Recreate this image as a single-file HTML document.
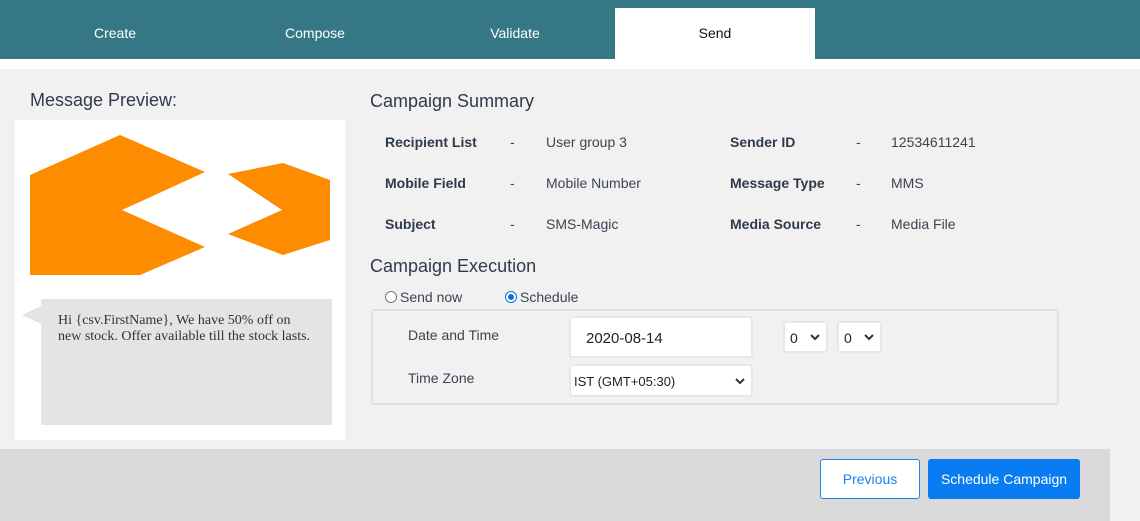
<!DOCTYPE html>
<html><head><style>
*{margin:0;padding:0;box-sizing:border-box}
body{width:1140px;height:521px;background:#f1f1f1;font-family:"Liberation Sans",sans-serif;position:relative;overflow:hidden;color:#2f3a4a}
.abs{position:absolute}
.hdr{left:0;top:0;width:1140px;height:59px;background:#367785}
.strip{left:0;top:59px;width:1140px;height:10px;background:#fff}
.tab{top:8px;height:51px;width:200px;text-align:center;line-height:51px;font-size:14px;color:#fff}
.lbl{font-size:14px;font-weight:bold;color:#2f3a4a}
.val{font-size:14px;color:#3a4452}
.h{font-size:18px;color:#2f3a4a}
.sel{background:#fff;border:2px solid #e3e8ee;border-radius:3px;font-size:14px;color:#222}
.chev{position:absolute;right:6px;top:50%;margin-top:-5px}
</style></head><body>
<div class="abs hdr"></div>
<div class="abs strip"></div>
<div class="abs tab" style="left:15px">Create</div>
<div class="abs tab" style="left:215px">Compose</div>
<div class="abs tab" style="left:415px">Validate</div>
<div class="abs tab" style="left:615px;background:#fff;color:#111">Send</div>

<div class="abs h" style="left:30px;top:90px">Message Preview:</div>
<div class="abs" style="left:15px;top:120px;width:330px;height:320px;background:#fff"></div>
<svg class="abs" style="left:30px;top:135px" width="300" height="140">
<polygon fill="#fd8c00" points="0,40 90,0 175,37 92,75 175,112 110,140 0,140" />
<polygon fill="#fd8c00" points="198,39 253,28 300,45 300,105 253,120 198,99 252,75" />
</svg>
<div class="abs" style="left:41px;top:299px;width:291px;height:126px;background:#e4e4e4;border-radius:2px"></div>
<div class="abs" style="left:22px;top:306px;width:0;height:0;border-top:9px solid transparent;border-bottom:9px solid transparent;border-right:19px solid #e4e4e4"></div>
<div class="abs" style="left:58px;top:313px;width:255px;font-family:'Liberation Serif',serif;font-size:14px;line-height:16px;color:#333">Hi {csv.FirstName}, We have 50% off on new stock. Offer available till the stock lasts.</div>

<div class="abs h" style="left:370px;top:91px">Campaign Summary</div>
<div class="abs lbl" style="left:385px;top:134px">Recipient List</div>
<div class="abs val" style="left:510px;top:134px">-</div>
<div class="abs val" style="left:546px;top:134px">User group 3</div>
<div class="abs lbl" style="left:730px;top:134px">Sender ID</div>
<div class="abs val" style="left:856px;top:134px">-</div>
<div class="abs val" style="left:891px;top:134px">12534611241</div>
<div class="abs lbl" style="left:385px;top:175px">Mobile Field</div>
<div class="abs val" style="left:510px;top:175px">-</div>
<div class="abs val" style="left:546px;top:175px">Mobile Number</div>
<div class="abs lbl" style="left:730px;top:175px">Message Type</div>
<div class="abs val" style="left:856px;top:175px">-</div>
<div class="abs val" style="left:891px;top:175px">MMS</div>
<div class="abs lbl" style="left:385px;top:216px">Subject</div>
<div class="abs val" style="left:510px;top:216px">-</div>
<div class="abs val" style="left:546px;top:216px">SMS-Magic</div>
<div class="abs lbl" style="left:730px;top:216px">Media Source</div>
<div class="abs val" style="left:856px;top:216px">-</div>
<div class="abs val" style="left:891px;top:216px">Media File</div>

<div class="abs h" style="left:370px;top:256px">Campaign Execution</div>
<div class="abs" style="left:385px;top:291px;width:12px;height:12px;border:1px solid #777;border-radius:50%;background:#fff"></div>
<div class="abs val" style="left:400px;top:289px">Send now</div>
<div class="abs" style="left:505px;top:291px;width:12px;height:12px;border:1px solid #0a6fd6;border-radius:50%;background:#fff"><div style="margin:2px;width:6px;height:6px;border-radius:50%;background:#0a6fd6"></div></div>
<div class="abs val" style="left:520px;top:289px">Schedule</div>
<div class="abs" style="left:371px;top:309px;width:688px;height:96px;border:2px solid #e0e0e0;border-radius:3px"></div>
<div class="abs val" style="left:408px;top:327px">Date and Time</div>
<div class="abs val" style="left:408px;top:370px">Time Zone</div>
<div class="abs sel" style="left:569px;top:316px;width:184px;height:42px;padding:12px 0 0 15px;font-size:15px">2020-08-14</div>
<div class="abs sel" style="left:783px;top:321px;width:45px;height:32px;padding:7px 0 0 5px">0<svg class="chev" width="10" height="10" viewBox="0 0 10 10"><path d="M1 3 L5 7 L9 3" stroke="#333" stroke-width="2" fill="none"/></svg></div>
<div class="abs sel" style="left:837px;top:321px;width:45px;height:32px;padding:7px 0 0 5px">0<svg class="chev" width="10" height="10" viewBox="0 0 10 10"><path d="M1 3 L5 7 L9 3" stroke="#333" stroke-width="2" fill="none"/></svg></div>
<div class="abs sel" style="left:569px;top:364px;width:184px;height:33px;padding:8px 0 0 3px;font-size:13px">IST (GMT+05:30)<svg class="chev" width="10" height="10" viewBox="0 0 10 10"><path d="M1 3 L5 7 L9 3" stroke="#333" stroke-width="2" fill="none"/></svg></div>

<div class="abs" style="left:0;top:449px;width:1110px;height:72px;background:#dadada"></div>
<div class="abs" style="left:820px;top:459px;width:100px;height:40px;background:#fff;border:1px solid #1a84f0;border-radius:3px;color:#1a84f0;font-size:14px;text-align:center;line-height:38px">Previous</div>
<div class="abs" style="left:928px;top:459px;width:152px;height:40px;background:#0a7cf2;border-radius:3px;color:#fff;font-size:14px;text-align:center;line-height:40px">Schedule Campaign</div>
</body></html>
